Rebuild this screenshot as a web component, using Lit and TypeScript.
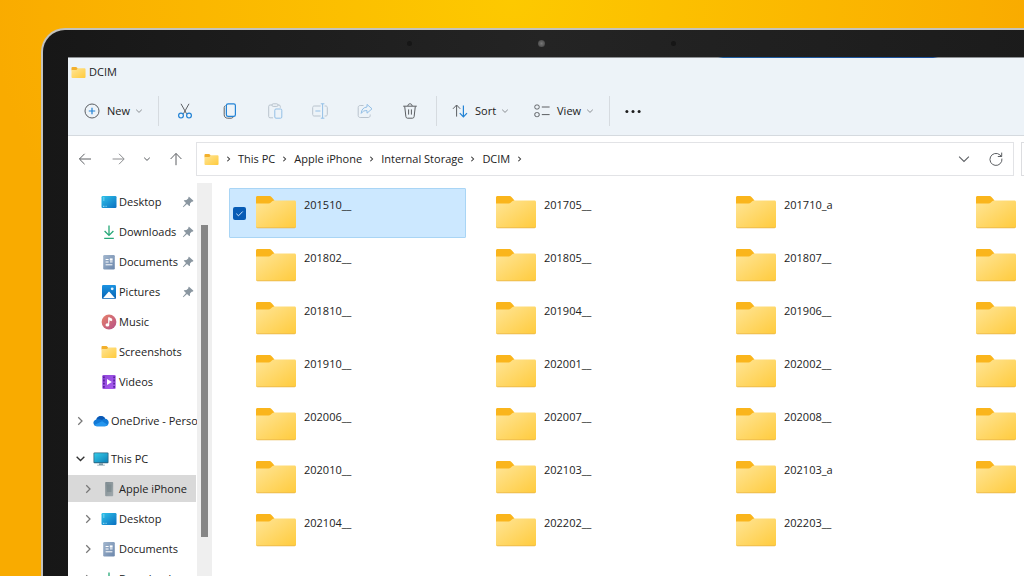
import { LitElement, html, svg, css, nothing } from "lit";
import { customElement, state } from "lit/decorators.js";
import { classMap } from "lit/directives/class-map.js";

const gradients = html`<svg class="defs" aria-hidden="true" width="0" height="0">
  <defs>
    <linearGradient id="folder" x1="0" y1="0" x2="1" y2="1">
      <stop offset="0" stop-color="#ffe596" /><stop offset="1" stop-color="#ffcb3d" />
    </linearGradient>
    <linearGradient id="desk" x1="0" y1="0" x2="1" y2="1">
      <stop offset="0" stop-color="#2fc3ea" /><stop offset="1" stop-color="#0a6fc0" />
    </linearGradient>
    <linearGradient id="deskpc" x1="0" y1="0" x2="1" y2="1">
      <stop offset="0" stop-color="#34cbe8" /><stop offset="1" stop-color="#0d80b8" />
    </linearGradient>
    <linearGradient id="doc" x1="0" y1="0" x2="1" y2="1">
      <stop offset="0" stop-color="#a3b7ce" /><stop offset="1" stop-color="#6b86ab" />
    </linearGradient>
    <linearGradient id="pic" x1="0" y1="0" x2="0" y2="1">
      <stop offset="0" stop-color="#1c93e2" /><stop offset="1" stop-color="#0763b2" />
    </linearGradient>
    <linearGradient id="music" x1="0" y1="0" x2="1" y2="1">
      <stop offset="0" stop-color="#e8826a" /><stop offset="1" stop-color="#b55087" />
    </linearGradient>
    <linearGradient id="video" x1="0" y1="0" x2="1" y2="1">
      <stop offset="0" stop-color="#8f45d8" /><stop offset="1" stop-color="#a95df0" />
    </linearGradient>
    <linearGradient id="phone" x1="0" y1="0" x2="1" y2="1">
      <stop offset="0" stop-color="#7d8a90" /><stop offset="1" stop-color="#a0a9ad" />
    </linearGradient>
  </defs>
</svg>`;

const smallFolder = (w: number) => html`<svg width=${w} height=${w} viewBox="0 0 16 16" aria-hidden="true">
  <path d="M.5 3.2c0-.7.4-1.1 1-1.1h4l1.6 1.4v2H.5z" fill="#f3b02c" />
  <path d="M.5 5.2h5.2l1.8-1.7h7c.6 0 1 .4 1 1v8.400c0 .6-.4 1-1 1h-13c-.6 0-1-.4-1-1z" fill="url(#folder)" />
</svg>`;

const bigFolder = html`<svg class="folder" viewBox="0 0 40 33" aria-hidden="true">
  <path d="M0 1.500C0 .6.600 0 1.500 0H13c1.200 0 2 .3 2.700 1.200L18.500 4.600 14 9H0z" fill="#fab51c" />
  <path d="M0 7.500h12.500c1 0 1.700-.3 2.400-1l1.300-1.300c.6-.5 1.100-.7 1.900-.7H38.500c.9 0 1.500.6 1.500 1.500v24.500c0 .9-.6 1.500-1.500 1.500h-37C.6 32 0 31.400 0 30.500z" fill="url(#folder)" />
  <path d="M.4 31.200c.3.500.7.600 1.200.600h36.800c.5 0 .900-.1 1.200-.600" fill="none" stroke="#e9b64a" stroke-width=".8" />
</svg>`;

const chevron = (dir: "down" | "right", size: number) => html`<svg class="chev" width=${size} height=${size} viewBox="0 0 8 8" aria-hidden="true">
  <path d=${dir === "down" ? "M1.200 2.700 4 5.400l2.800-2.700" : "M2.600 1l3 3-3 3"} />
</svg>`;

const crumbMark = html`<svg class="chev crumb" width="5" height="6" viewBox="1 0 6 8" aria-hidden="true"><path d="M2.400 1l3 3-3 3" /></svg>`;

const line = (body: unknown) => html`<svg class="line" width="16" height="16" viewBox="0 0 16 16" aria-hidden="true">${body}</svg>`;

const icons = {
  add: line(svg`<circle cx="8" cy="8" r="7" /><path class="blue" d="M8 4.800v6.400M4.800 8h6.400" />`),
  cut: line(svg`<path d="M4 .8l5.600 10M12 .8 6.400 10.800" /><circle class="blue" cx="4" cy="12.600" r="2.400" /><circle class="blue" cx="12" cy="12.600" r="2.400" />`),
  copy: line(svg`<path d="M3.500 2.600C2.600 3 2.200 3.600 2.200 4.500v7.300c0 2 1.400 3.400 3.400 3.400h3.600c.9 0 1.600-.4 2-1.200" /><rect class="blue" x="4.400" y=".8" width="9" height="12.600" rx="1.700" />`),
  paste: line(svg`<path d="M6 14.800H3c-.8 0-1.300-.5-1.300-1.300V3.300C1.700 2.500 2.200 2 3 2h2M11 2h1c.8 0 1.300.5 1.300 1.300v1.500" /><rect x="5" y=".8" width="6" height="2.600" rx="1.200" /><rect class="blue" x="7.800" y="6" width="7" height="9.200" rx="1.200" />`),
  rename: line(svg`<path d="M8.600 13H2.200C1.300 13 .7 12.400.7 11.500v-7C.7 3.600 1.300 3 2.200 3h6.400M12.600 3h1.200c.9 0 1.500.6 1.500 1.500v7c0 .9-.6 1.500-1.500 1.500h-1.200" /><path class="blue" d="M8.800.8h3.600M8.800 15.200h3.600M10.600.8v14.400M3.400 8h5" />`),
  share: line(svg`<path d="M6.500 2.500H3.200C2 2.500 1.200 3.300 1.200 4.500v8c0 1.200.8 2 2 2h8c1.200 0 2-.8 2-2V11.500" /><path class="blue" d="M10 1.400l5 4.400-5 4.400V7.600C7.400 7.400 5.600 8.300 4.200 10.400 4.400 6.800 6.400 4.300 10 4z" />`),
  trash: line(svg`<path d="M1.200 3.200h13.600M2.700 3.400l1.200 10.300c.1.900.7 1.500 1.600 1.500h5c.9 0 1.500-.6 1.600-1.500l1.200-10.300M5.900 3C5.900 1.600 6.700.8 8 .8s2.100.8 2.100 2.200M6.600 6.400v5.200M9.400 6.400v5.200" />`),
  sort: line(svg`<path d="M4.600 13.600V2.200M1 5.800l3.600-3.800 3.600 3.800" /><path class="blue" d="M11.400 2.400v11.400M7.800 10.200l3.600 3.800 3.600-3.800" />`),
  view: line(svg`<rect x=".8" y="2" width="4.400" height="4" rx="1.600" /><rect x=".8" y="9.600" width="4.400" height="4" rx="1.600" /><path d="M7.800 4H15.600M7.800 11.600H15.600" />`),
  more: html`<svg width="16" height="16" viewBox="0 0 16 16" aria-hidden="true"><g fill="#1d1d1d"><circle cx="1.900" cy="8.500" r="1.500" /><circle cx="8" cy="8.500" r="1.500" /><circle cx="14.100" cy="8.500" r="1.500" /></g></svg>`,
  back: line(svg`<path d="M14 8H2.600M7.600 2.800 2.400 8l5.200 5.200" />`),
  forward: line(svg`<path d="M2.600 8H14M9 2.800 14.200 8 9 13.200" />`),
  up: line(svg`<path d="M8 14.200V2.600M2.600 8 8 2.400 13.400 8" />`),
  refresh: line(svg`<path d="M13.900 7.600A6 6 0 1 1 11.900 3.900L13.600 5.400M13.700 1.600V5.500H9.800" />`),
};

const navIcons: Record<string, unknown> = {
  desktop: html`<svg width="16" height="16" viewBox="0 0 16 16" aria-hidden="true"><rect x=".5" y="2" width="15" height="12" rx="1.200" fill="url(#desk)" /><path d="M2.200 4h1.200M2.200 6h1.200M2 12.300h1.400M4.600 12.300h1" stroke="#b9ecfb" stroke-width=".9" /></svg>`,
  downloads: html`<svg width="16" height="16" viewBox="0 0 16 16" aria-hidden="true"><path d="M8 1.500v9.700M3.600 7 8 11.400 12.400 7M3.200 14.400h9.600" fill="none" stroke="#27a878" stroke-width="1.300" /></svg>`,
  documents: html`<svg width="16" height="16" viewBox="0 0 16 16" aria-hidden="true"><rect x="2.200" y="1" width="11.600" height="14.400" rx="1.200" fill="url(#doc)" /><path d="M4.600 5.500h3M4.600 8h3M4.600 10.800h6.800M9 7.900h2.600" stroke="#fff" stroke-width="1" /><rect x="8.800" y="4.400" width="2.800" height="2.200" fill="#fff" /></svg>`,
  pictures: html`<svg width="16" height="16" viewBox="0 0 16 16" aria-hidden="true"><rect x="1" y="1" width="14" height="14" rx="1.200" fill="url(#pic)" /><path d="M2 14.200 7.200 8.200c.5-.5 1.100-.5 1.600 0L14 14.200z" fill="#fff" /><circle cx="11.200" cy="4.800" r="1.400" fill="#e4f4ff" /></svg>`,
  music: html`<svg width="16" height="16" viewBox="0 0 16 16" aria-hidden="true"><circle cx="8" cy="8" r="7.400" fill="url(#music)" /><path d="M7.700 10.800V3.600l3 1.300v1.800L8.700 6" fill="#fff" stroke="#fff" stroke-width="1" /><ellipse cx="6.400" cy="10.900" rx="1.900" ry="1.700" fill="#fff" /></svg>`,
  folder: smallFolder(16),
  videos: html`<svg width="16" height="16" viewBox="0 0 16 16" aria-hidden="true"><rect x="1.300" y="1" width="13.400" height="14" rx="1.200" fill="url(#video)" /><path d="M2.900 2.400v11.600M13.100 2.400v11.600" stroke="#4b1a92" stroke-width="1.500" stroke-dasharray="1.800 1.400" /><path d="M6 4.900 10.900 8 6 11.100z" fill="#fff" /></svg>`,
  onedrive: html`<svg width="16" height="16" viewBox="0 0 16 16" aria-hidden="true"><path d="M4 13.200C1.900 13.200.4 11.700.4 9.800c0-1.700 1.200-3.100 2.900-3.400C4 4.300 5.800 3 7.900 3c1.900 0 3.500 1 4.300 2.700 2 .1 3.500 1.700 3.500 3.700s-1.600 3.800-3.700 3.800z" fill="#1179d6" /><path d="M3.300 6.400C4 4.300 5.800 3 7.900 3c1.900 0 3.500 1 4.300 2.700-1.300-.1-2.300.4-3.100 1.300C7.500 6.200 5.300 5.900 3.300 6.400z" fill="#0b57b3" /><path d="M1.300 12 9.100 8.200l5.700 3.600c-.6.800-1.600 1.400-2.800 1.400H4c-1.100 0-2-.4-2.700-1.200z" fill="#2596ee" /></svg>`,
  pc: html`<svg width="16" height="16" viewBox="0 0 16 16" aria-hidden="true"><rect x=".5" y="1.600" width="15" height="10.600" rx="1" fill="#2b6480" /><rect x="1.300" y="2.300" width="13.400" height="9" rx=".4" fill="url(#deskpc)" /><path d="M6 12.200h4v1.500h1.800v.9H4.200v-.9H6z" fill="#7c99a6" /></svg>`,
  phone: html`<svg width="16" height="16" viewBox="0 0 16 16" aria-hidden="true"><rect x="4.200" y="1" width="8" height="14.200" rx=".8" fill="url(#phone)" /><path d="M6 3.500h4.500v7.500H6z" fill="#77868b" opacity=".6" /></svg>`,
};

const pin = html`<svg class="pin" width="12" height="12" viewBox="0 0 12 12" aria-label="Pinned">
  <path d="M7.300 1 11.200 4.600c.3.300.2.700-.2.800L9.700 5.800 8 7.600 7.900 9.700c0 .4-.4.500-.7.200L5 8 1.400 11.300.8 10.700 4 7 2 5c-.3-.3-.2-.7.200-.7L4.400 4 6.200 2.400 6.500 1.200c.1-.4.500-.5.8-.2z" fill="#8a96a0" />
</svg>`;

interface NavItem {
  label: string;
  icon: string;
  level: number;
  pinned?: boolean;
  arrow?: "right" | "down";
  selected?: boolean;
}

const navGroups: NavItem[][] = [
  [
    { label: "Desktop", icon: "desktop", level: 1, pinned: true },
    { label: "Downloads", icon: "downloads", level: 1, pinned: true },
    { label: "Documents", icon: "documents", level: 1, pinned: true },
    { label: "Pictures", icon: "pictures", level: 1, pinned: true },
    { label: "Music", icon: "music", level: 1 },
    { label: "Screenshots", icon: "folder", level: 1 },
    { label: "Videos", icon: "videos", level: 1 },
  ],
  [{ label: "OneDrive - Perso", icon: "onedrive", level: 0, arrow: "right" }],
  [
    { label: "This PC", icon: "pc", level: 0, arrow: "down" },
    { label: "Apple iPhone", icon: "phone", level: 1, arrow: "right", selected: true },
    { label: "Desktop", icon: "desktop", level: 1, arrow: "right" },
    { label: "Documents", icon: "documents", level: 1, arrow: "right" },
    { label: "Downloads", icon: "downloads", level: 1, arrow: "right" },
  ],
];

const rows: string[][] = [
  ["201510__", "201705__", "201710_a", ""],
  ["201802__", "201805__", "201807__", ""],
  ["201810__", "201904__", "201906__", ""],
  ["201910__", "202001__", "202002__", ""],
  ["202006__", "202007__", "202008__", ""],
  ["202010__", "202103__", "202103_a", ""],
  ["202104__", "202202__", "202203__"],
];

@customElement("app-root")
export class AppRoot extends LitElement {
  @state() private selected = "201510__";

  static styles = css`
    :host {
      display: block;
      height: 100vh;
      overflow: hidden;
      font: 11px/16px "Open Sans", "Noto Sans", sans-serif;
      color: #222;
      background: radial-gradient(ellipse 520px 420px at 50% 0, #fdc900, #faae00 90%, #f9ab00);
    }
    * { box-sizing: border-box; }
    svg { display: block; flex: none; }
    button, a { font: inherit; color: inherit; text-decoration: none; }
    button { display: flex; align-items: center; border: 0; padding: 0; background: none; }
    .defs { position: absolute; }
    .desk { height: 100%; padding: 28px 0 0 41px; overflow: hidden; }
    .laptop {
      display: flex;
      flex-direction: column;
      height: 100%;
      margin-right: -272px;
      padding: 0 25px;
      border: 2px solid #c3c2bd;
      border-bottom: 0;
      border-radius: 24px 24px 0 0;
      background: linear-gradient(90deg, #171717, #242424 40%, #1b1b1b 80%);
    }
    .camera-bar { display: flex; align-items: center; justify-content: center; gap: 126px; height: 27px; flex: none; padding-right: 254px; }
    .mic { width: 5px; height: 5px; border-radius: 50%; background: #161616; }
    .lens { width: 7px; height: 7px; border-radius: 50%; background: radial-gradient(#777, #3c3c3c); }
    .screen { flex: 1; min-height: 0; display: flex; flex-direction: column; background: #fff; }
    .glow { height: 1px; flex: none; background: linear-gradient(90deg, #8d9093 650px, #1f5ea0 655px, #1c4f9a 865px, #8d9093 870px); }
    .head { flex: none; background: #edf3f8; border-bottom: 1px solid #d5dadf; }
    .title { display: flex; align-items: center; gap: 3px; height: 28px; padding-left: 3px; }
    .title h1 { margin: 0; font: inherit; }
    .tools { display: flex; align-items: center; height: 49px; padding-left: 16px; }
    .line { fill: none; stroke: #5c5f63; stroke-width: 1; }
    .line .blue { stroke: #2383d5; stroke-width: 1.2; }
    .chev { fill: none; stroke: #8b8f93; stroke-width: 1; }
    .tool { gap: 7px; }
    .tool .chev { margin-left: -2px; }
    .tool + .tool { margin-left: 25px; }
    .sep { width: 1px; height: 30px; margin: 0 15px; background: #d6dbe0; }
    .sep.near { margin-right: 0; }
    .cluster + .sep { margin-left: 0; }
    .cluster { display: flex; padding: 0 3px 0 4px; }
    .icon-btn { width: 45px; height: 30px; justify-content: center; }
    .icon-btn:disabled .line { stroke: #b9c3cd; }
    .icon-btn:disabled .blue { stroke: #93bfe6; stroke-width: 1; }
    .address { display: flex; align-items: flex-start; flex: none; height: 47px; padding: 6px 8px 0 9px; }
    .history { display: flex; align-items: center; gap: 17px; height: 34px; margin-right: 12px; }
    .history .fade { opacity: .7; }
    .history .chev { stroke: #55595d; }
    .path { flex: 1; display: flex; align-items: center; gap: 7px; height: 34px; padding: 0 9px 0 7px; border: 1px solid #e2e3e6; background: #fff; }
    .path a { white-space: nowrap; }
    .path .crumb { stroke: #333; stroke-width: 1.400; }
    .path .open { margin-left: auto; margin-right: 10px; }
    .path .open .chev { stroke: #5c5f63; stroke-width: .6; }
    .search { width: 240px; height: 34px; margin-left: 7px; border: 1px solid #dcdde0; background: #fff; font: inherit; }
    .body { flex: 1; min-height: 0; display: flex; overflow: hidden; }
    .nav { width: 129px; flex: none; padding: 3px 0 0; overflow: hidden; }
    .group { margin: 0 0 8px; padding: 0; list-style: none; }
    .group:first-child { margin-bottom: 9px; }
    .group li { height: 30px; padding: 2px 1px 1px 0; }
    .item { display: flex; align-items: center; gap: 2px; height: 27px; padding-left: 7px; white-space: nowrap; }
    .item.nested { padding-left: 15px; }
    .item .arrow { display: flex; width: 16px; flex: none; }
    .item .chev { stroke: #777; }
    .item .down .chev { stroke: #333; }
    .item.selected { background: #d9d9d9; }
    .item .pin { margin-left: auto; margin-right: 2px; }
    .track { width: 15px; flex: none; padding: 42px 4px 0; background: #efefef; }
    .thumb { height: 312px; background: #868686; }
    .files { flex: 1; display: grid; grid-template-columns: repeat(auto-fill, 240px); grid-auto-rows: 53px; align-content: start; padding: 5px 0 0 17px; overflow: hidden; }
    .tile { display: flex; align-items: flex-start; width: 237px; height: 50px; padding: 7px 3px; border: 1px solid transparent; grid-column: auto; }
    .tile.first { grid-column-start: 1; }
    .tile.selected { background: #cce8ff; border-color: #a9d5f5; border-radius: 1px; }
    .check { display: grid; width: 13px; height: 13px; margin: 11px 10px 0 0; flex: none; opacity: 0; }
    .selected .check { opacity: 1; }
    .check > * { grid-area: 1 / 1; }
    .check input { appearance: none; width: 13px; height: 13px; margin: 0; border-radius: 2px; background: #075bb5; }
    .check svg { pointer-events: none; }
    .folder { width: 40px; height: 33px; }
    .name { margin: 1px 0 0 8px; }
  `;

  private renderItem(item: NavItem) {
    const classes = { item: true, nested: item.level === 1, selected: !!item.selected };
    return html`<li>
      <a class=${classMap(classes)} href="#">
        <span class=${classMap({ arrow: true, down: item.arrow === "down" })}>${item.arrow ? chevron(item.arrow, item.arrow === "down" ? 11 : 10) : nothing}</span>
        ${navIcons[item.icon]}<span>${item.label}</span>${item.pinned ? pin : nothing}
      </a>
    </li>`;
  }

  private renderTile(name: string, column: number) {
    const on = name !== "" && name === this.selected;
    return html`<label class=${classMap({ tile: true, first: column === 0, selected: on })}>
      <span class="check">
        <input type="checkbox" aria-label=${name || "Folder"} .checked=${on} @change=${() => (this.selected = on ? "" : name)} />
        <svg width="13" height="13" viewBox="0 0 13 13" aria-hidden="true"><path d="M3.300 6.700l2.200 2.100 4.200-4.300" fill="none" stroke="#cfe6ff" stroke-width="1" /></svg>
      </span>
      ${bigFolder}<span class="name">${name}</span>
    </label>`;
  }

  render() {
    return html`${gradients}
      <div class="desk">
        <div class="laptop">
          <div class="camera-bar"><i class="mic"></i><i class="lens"></i><i class="mic"></i></div>
          <main class="screen">
            <div class="glow"></div>
            <header class="head">
              <div class="title">${smallFolder(15)}<h1>DCIM</h1></div>
              <div class="tools">
                <button class="tool">${icons.add}<span>New</span>${chevron("down", 8)}</button>
                <span class="sep near"></span>
                <div class="cluster">
                  <button class="icon-btn" aria-label="Cut">${icons.cut}</button>
                  <button class="icon-btn" aria-label="Copy">${icons.copy}</button>
                  <button class="icon-btn" aria-label="Paste" disabled>${icons.paste}</button>
                  <button class="icon-btn" aria-label="Rename" disabled>${icons.rename}</button>
                  <button class="icon-btn" aria-label="Share" disabled>${icons.share}</button>
                  <button class="icon-btn" aria-label="Delete">${icons.trash}</button>
                </div>
                <span class="sep"></span>
                <button class="tool">${icons.sort}<span>Sort</span>${chevron("down", 8)}</button>
                <button class="tool">${icons.view}<span>View</span>${chevron("down", 8)}</button>
                <span class="sep"></span>
                <button aria-label="More">${icons.more}</button>
              </div>
            </header>
            <div class="address">
              <nav class="history">
                <button aria-label="Back">${icons.back}</button>
                <button class="fade" aria-label="Forward">${icons.forward}</button>
                <button aria-label="Recent">${chevron("down", 8)}</button>
                <button aria-label="Up">${icons.up}</button>
              </nav>
              <div class="path">
                ${smallFolder(15)}
                ${["This PC", "Apple iPhone", "Internal Storage", "DCIM"].map(
                  (part) => html`${crumbMark}<a href="#">${part}</a>`
                )}
                ${crumbMark}
                <button class="open" aria-label="Previous locations">${chevron("down", 14)}</button>
                <button aria-label="Refresh">${icons.refresh}</button>
              </div>
              <input class="search" type="search" aria-label="Search" />
            </div>
            <div class="body">
              <nav class="nav">${navGroups.map((g) => html`<ul class="group">${g.map((i) => this.renderItem(i))}</ul>`)}</nav>
              <div class="track"><div class="thumb"></div></div>
              <section class="files">${rows.map((r) => r.map((n, c) => this.renderTile(n, c)))}</section>
            </div>
          </main>
        </div>
      </div>`;
  }
}
